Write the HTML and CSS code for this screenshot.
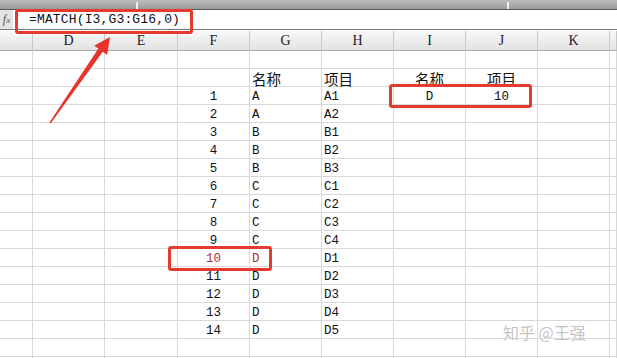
FILE: index.html
```html
<!DOCTYPE html>
<html>
<head>
  <title>MATCH</title>
  <meta name="viewport" content="width=device-width, initial-scale=1">
  <link rel="stylesheet" href="styles.css">
</head>
<body>
  <div class="toolbar"><span class="tick tick-a"></span><span class="tick tick-b"></span></div>
  <div class="formula-bar">
    <span class="fx">f<small>x</small></span>
    <span class="formula">=MATCH(I3,G3:G16,0)</span>
  </div>
  <div class="sheet" id="sheet"></div>

  <div class="mark mark-formula"></div>
  <div class="mark mark-result"></div>
  <div class="mark mark-row"></div>
  <svg class="arrow" width="120" height="130" viewBox="0 0 120 130">
    <polygon points="110,37 107.2,55 102.8,51.8 50.6,123.4 49.4,122.6 98.4,48.6 94.2,45.8" fill="#e8342b"/>
  </svg>
  <div class="watermark">知乎 @王强</div>

  <script>
    const sheet = document.getElementById('sheet');
    const heads = ['', 'D', 'E', 'F', 'G', 'H', 'I', 'J', 'K', ''];
    const letters = ['A','A','B','B','B','C','C','C','C','D','D','D','D','D'];
    const codes = ['A1','A2','B1','B2','B3','C1','C2','C3','C4','D1','D2','D3','D4','D5'];

    heads.forEach(h => {
      const c = document.createElement('div');
      c.className = 'head';
      c.textContent = h;
      sheet.appendChild(c);
    });

    const rows = [[], ['', '', '', '', '名称', '项目', '名称', '项目']];
    letters.forEach((l, i) => {
      const r = ['', '', '', String(i + 1), l, codes[i]];
      if (i === 0) r.push('D', '10');
      rows.push(r);
    });
    rows.push([], []);

    rows.forEach((r, ri) => {
      for (let ci = 0; ci < 10; ci++) {
        const c = document.createElement('div');
        let cls = 'cell';
        if (ci === 3 || ci === 6 || ci === 7) cls += ' center';
        if (ri === 11 && (ci === 3 || ci === 4)) cls += ' hit';
        c.className = cls;
        const v = r[ci] || '';
        if (/[\u4e00-\u9fff]/.test(v)) {
          c.innerHTML = '<span class="cjk">' + v + '</span>';
        } else {
          c.textContent = v;
        }
        sheet.appendChild(c);
      }
    });
  </script>
</body>
</html>
```

FILE: styles.css
```css
body {
  margin: 0;
  width: 617px;
  height: 358px;
  overflow: hidden;
  position: relative;
  background: #fff;
  font-family: "Liberation Mono", "Noto Sans CJK SC", monospace;
}
.toolbar {
  height: 9px;
  background: linear-gradient(#bdbdbd, #9a9a9a);
  border-bottom: 1px solid #5a5a5a;
  position: relative;
}
.tick {
  position: absolute;
  top: 2px;
  width: 2px;
  height: 7px;
  background: #f0f0f0;
}
.tick-a { left: 136px; }
.tick-b { left: 507px; }
.formula-bar {
  height: 19px;
  display: flex;
  align-items: center;
  border-bottom: 1px solid #7a7a7a;
}
.fx {
  width: 13px;
  height: 19px;
  background: #e4e4e4;
  color: #555;
  font-family: "Liberation Serif", serif;
  font-style: italic;
  font-size: 12px;
  line-height: 18px;
  text-align: center;
}
.fx small {
  font-size: 9px;
}
.formula {
  margin-left: 16px;
  font-size: 13px;
  letter-spacing: 0.15px;
  color: #111;
}
.sheet {
  margin-top: 1px;
  display: grid;
  grid-template-columns: 33px 72px 73px repeat(6, 72px) 1fr;
  grid-template-rows: 20px;
  grid-auto-rows: 18px;
}
.head {
  box-sizing: border-box;
  background: linear-gradient(#f8f8f8, #e2e2e2);
  border-right: 1px solid #c8c8c8;
  border-bottom: 1px solid #a8a8a8;
  font-family: "Liberation Serif", serif;
  font-size: 14px;
  color: #222;
  text-align: center;
  line-height: 20px;
}
.cell {
  box-sizing: border-box;
  border-right: 1px solid #d8d8d8;
  border-bottom: 1px solid #d8d8d8;
  font-size: 12.5px;
  line-height: 21px;
  padding-left: 2px;
  color: #111;
  white-space: nowrap;
}
.center {
  text-align: center;
  padding-left: 0;
}
.hit {
  color: #a8323a;
}
.cjk {
  display: inline-block;
  font-family: "Noto Sans CJK SC", sans-serif;
  font-size: 14.5px;
  line-height: 18px;
  vertical-align: top;
  padding-top: 1px;
}
.mark {
  position: absolute;
  border: 3px solid #e53b2f;
  border-radius: 3px;
  box-sizing: border-box;
}
.mark-formula {
  left: 15px;
  top: 9px;
  width: 178px;
  height: 25px;
}
.mark-result {
  left: 389px;
  top: 84px;
  width: 143px;
  height: 24px;
}
.mark-row {
  left: 168px;
  top: 246px;
  width: 104px;
  height: 25px;
}
.arrow {
  position: absolute;
  left: 0;
  top: 0;
}
.watermark {
  position: absolute;
  left: 503px;
  top: 320px;
  font-family: "Noto Sans CJK SC", sans-serif;
  font-size: 16px;
  color: #c4c4c4;
  text-shadow: 0 0 2px #fff;
}
```
